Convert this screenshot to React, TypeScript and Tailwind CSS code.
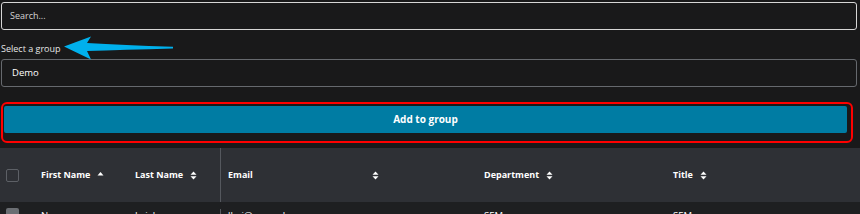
import React from 'react';

const font = { fontFamily: '"Open Sans", "Noto Sans", sans-serif' };

function SortIcon({ dir }: { dir?: 'asc' | 'both' }) {
  if (dir === 'asc') {
    return (
      <svg width="7" height="8" viewBox="0 0 7 8" className="shrink-0">
        <path d="M0.5 4.5 L3.5 1 L6.5 4.5 Z" fill="#ffffff" />
      </svg>
    );
  }
  return (
    <svg width="7" height="9" viewBox="0 0 7 9" className="shrink-0">
      <path d="M0.5 3.8 L3.5 0.5 L6.5 3.8 Z" fill="#ffffff" />
      <path d="M0.5 5.2 L3.5 8.5 L6.5 5.2 Z" fill="#ffffff" />
    </svg>
  );
}

function ArrowAnnotation() {
  return (
    <svg width="112" height="26" viewBox="0 0 112 26" className="absolute left-[62px] top-[-4px]">
      <path
        d="M1 10.5 L28 0.5 L24 7 Q60 9 110 10.8 L110 12.6 Q60 14 24 15 L28 23.5 Z"
        fill="#00b0ec"
      />
    </svg>
  );
}

export default function App() {
  return (
    <div className="h-[214px] w-[860px] overflow-hidden bg-[#19191a] text-[10px] text-[#e6e6e6]" style={font}>
      <div className="pl-[1px] pr-[3px] pt-[2px]">
        <div className="flex h-[28px] items-center rounded-[3px] border border-[#d6d6d6] px-[8px] text-[9px] text-[#d4d4d4]">
          Search...
        </div>
        <div className="relative mt-[10px] h-[18px] text-[9px] leading-[18px]">
          Select a group
          <ArrowAnnotation />
        </div>
        <div className="mt-[1px] flex h-[28px] items-center rounded-[3px] border border-[#66696e] px-[10px] text-[9.5px] text-white">
          Demo
        </div>
      </div>

      <div className="mt-[15px] pl-[1px] pr-[7px]">
        <div className="rounded-[6px] border-2 border-[#ff0000] pb-[8px] pl-[1px] pr-[4px] pt-[2px]">
          <button
            type="button"
            className="flex h-[27px] w-full items-center justify-center rounded-[2px] bg-[#007ca3] font-bold text-white"
          >
            Add to group
          </button>
        </div>
      </div>

      <div className="mt-[5px]">
        <div className="grid h-[54px] grid-cols-[33px_94px_93px_256px_189px_1fr] items-center bg-[#2e3035] text-[9px] font-bold text-white">
          <div className="flex justify-end pr-[14px]">
            <span className="h-[13px] w-[13px] rounded-[2px] border border-[#5d6066]" />
          </div>
          <div className="flex items-center gap-[7px] px-[8px]">
            First Name <SortIcon dir="asc" />
          </div>
          <div className="flex items-center gap-[7px] px-[8px]">
            Last Name <SortIcon />
          </div>
          <div className="flex h-full items-center border-l border-[#55585e] px-[7px]">
            <div className="flex w-[151px] items-center justify-between">
              Email <SortIcon />
            </div>
          </div>
          <div className="flex items-center gap-[7px] px-[8px]">
            Department <SortIcon />
          </div>
          <div className="flex items-center gap-[7px] px-[8px]">
            Title <SortIcon />
          </div>
        </div>
        <div className="grid h-[30px] grid-cols-[33px_94px_93px_256px_189px_1fr] bg-[#1e1f21] pt-[7px] text-[9.5px] text-white">
          <div className="flex justify-end pr-[14px]">
            <span className="mt-[-1px] h-[13px] w-[13px] rounded-[2px] bg-[#6b6e73]" />
          </div>
          <div className="px-[8px]">Nancy</div>
          <div className="px-[8px]">Leigh</div>
          <div className="h-full border-l border-[#55585e] px-[7px]">lhei@example.com</div>
          <div className="px-[8px]">SEM</div>
          <div className="px-[8px]">SEM</div>
        </div>
      </div>
    </div>
  );
}
